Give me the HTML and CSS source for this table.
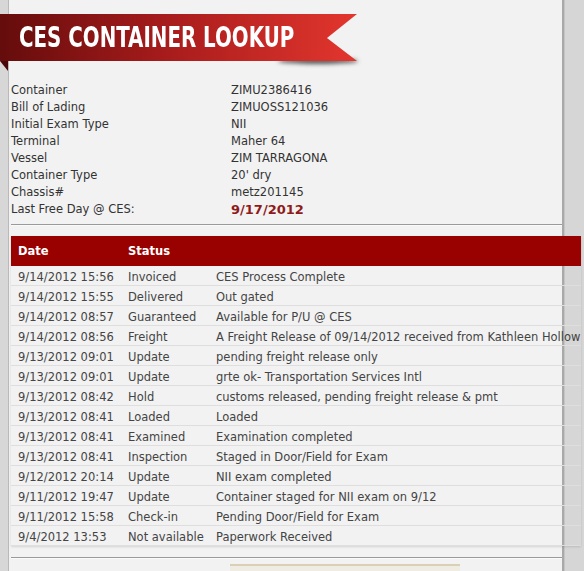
FILE: index.html
```html
<!DOCTYPE html>
<html>
<head>
<meta charset="utf-8">
<title>CES Container Lookup</title>
<link rel="stylesheet" href="styles.css">
</head>
<body>
<div class="page">
  <div class="gutter-left"></div>
  <main class="panel">
    <div class="ribbon">
      <svg class="ribbon-bg" width="360" height="60" viewBox="0 0 360 60">
        <defs>
          <linearGradient id="rg" x1="0" y1="0" x2="1" y2="0">
            <stop offset="0" stop-color="#650c0c"/>
            <stop offset="0.45" stop-color="#a51b1b"/>
            <stop offset="1" stop-color="#e3362e"/>
          </linearGradient>
          <filter id="blur" x="-20%" y="-200%" width="140%" height="500%">
            <feGaussianBlur stdDeviation="2"/>
          </filter>
        </defs>
        <ellipse cx="318" cy="47" rx="40" ry="3" fill="#555" filter="url(#blur)"/>
        <polygon points="0,0 357,0 327,24 357,47 0,47" fill="url(#rg)"/>
        <polygon points="0,47 8,47 8,57" fill="#4a0707"/>
      </svg>
      <h1 class="ribbon-title">CES CONTAINER LOOKUP</h1>
    </div>

    <dl class="info">
      <div class="info-row"><dt>Container</dt><dd>ZIMU2386416</dd></div>
      <div class="info-row"><dt>Bill of Lading</dt><dd>ZIMUOSS121036</dd></div>
      <div class="info-row"><dt>Initial Exam Type</dt><dd>NII</dd></div>
      <div class="info-row"><dt>Terminal</dt><dd>Maher 64</dd></div>
      <div class="info-row"><dt>Vessel</dt><dd>ZIM TARRAGONA</dd></div>
      <div class="info-row"><dt>Container Type</dt><dd>20' dry</dd></div>
      <div class="info-row"><dt>Chassis#</dt><dd>metz201145</dd></div>
      <div class="info-row"><dt>Last Free Day @ CES:</dt><dd class="due">9/17/2012</dd></div>
    </dl>

    <hr class="rule">

    <div class="history">
      <div class="h-row h-head"><span class="c-date">Date</span><span class="c-status">Status</span><span class="c-desc"></span></div>
      <div class="h-row"><span class="c-date">9/14/2012 15:56</span><span class="c-status">Invoiced</span><span class="c-desc">CES Process Complete</span></div>
      <div class="h-row"><span class="c-date">9/14/2012 15:55</span><span class="c-status">Delivered</span><span class="c-desc">Out gated</span></div>
      <div class="h-row"><span class="c-date">9/14/2012 08:57</span><span class="c-status">Guaranteed</span><span class="c-desc">Available for P/U @ CES</span></div>
      <div class="h-row"><span class="c-date">9/14/2012 08:56</span><span class="c-status">Freight</span><span class="c-desc">A Freight Release of 09/14/2012 received from Kathleen Hollow</span></div>
      <div class="h-row"><span class="c-date">9/13/2012 09:01</span><span class="c-status">Update</span><span class="c-desc">pending freight release only</span></div>
      <div class="h-row"><span class="c-date">9/13/2012 09:01</span><span class="c-status">Update</span><span class="c-desc">grte ok- Transportation Services Intl</span></div>
      <div class="h-row"><span class="c-date">9/13/2012 08:42</span><span class="c-status">Hold</span><span class="c-desc">customs released, pending freight release &amp; pmt</span></div>
      <div class="h-row"><span class="c-date">9/13/2012 08:41</span><span class="c-status">Loaded</span><span class="c-desc">Loaded</span></div>
      <div class="h-row"><span class="c-date">9/13/2012 08:41</span><span class="c-status">Examined</span><span class="c-desc">Examination completed</span></div>
      <div class="h-row"><span class="c-date">9/13/2012 08:41</span><span class="c-status">Inspection</span><span class="c-desc">Staged in Door/Field for Exam</span></div>
      <div class="h-row"><span class="c-date">9/12/2012 20:14</span><span class="c-status">Update</span><span class="c-desc">NII exam completed</span></div>
      <div class="h-row"><span class="c-date">9/11/2012 19:47</span><span class="c-status">Update</span><span class="c-desc">Container staged for NII exam on 9/12</span></div>
      <div class="h-row"><span class="c-date">9/11/2012 15:58</span><span class="c-status">Check-in</span><span class="c-desc">Pending Door/Field for Exam</span></div>
      <div class="h-row"><span class="c-date">9/4/2012 13:53</span><span class="c-status">Not available</span><span class="c-desc">Paperwork Received</span></div>
    </div>

    <hr class="rule rule-bottom">
    <div class="button-edge"></div>
  </main>
  <div class="gutter-right"></div>
</div>
</body>
</html>
```

FILE: styles.css
```css
* { box-sizing: border-box; }

html, body {
  margin: 0;
  padding: 0;
  background: #f2f2f2;
  font-family: "DejaVu Sans", Verdana, sans-serif;
  font-size: 11.5px;
  color: #333;
}

.page {
  display: flex;
  width: 584px;
  height: 571px;
  overflow: hidden;
}

.gutter-left {
  flex: 0 0 9px;
  background: #d7d7d7;
  border-right: 1px solid #b9b9b9;
}

.gutter-right {
  flex: 0 0 22px;
  background: #d6d6d6;
  border-left: 2px solid #a9a9a9;
  box-shadow: inset 1px 0 0 #c4c4c4;
}

.panel {
  flex: 1 1 auto;
  padding-left: 2px;
  min-width: 0;
  position: relative;
  z-index: 1;
}

.ribbon {
  position: relative;
  margin: 14px 0 0 -11px;
  height: 47px;
  width: 360px;
}

.ribbon-bg {
  position: absolute;
  left: 0;
  top: 0;
  overflow: visible;
}

.ribbon-title {
  position: relative;
  margin: 0 0 0 19px;
  line-height: 47px;
  font-family: "DejaVu Sans Condensed", "DejaVu Sans", sans-serif;
  font-stretch: condensed;
  font-weight: bold;
  font-size: 29px;
  color: #fff;
  white-space: nowrap;
  transform: scaleX(0.76);
  transform-origin: 0 50%;
}

.info {
  margin: 21px 0 0;
  padding: 0;
}

.info-row {
  display: flex;
  height: 17px;
  line-height: 17px;
}

.info-row dt {
  flex: 0 0 220px;
  margin: 0;
}

.info-row dd {
  margin: 0;
}

.info-row .due {
  color: #8e1a1a;
  font-weight: bold;
  font-size: 13px;
}

.rule {
  margin: 6px 0 0;
  border: 0;
  border-top: 1px solid #9a9a9a;
  border-bottom: 1px solid #fafafa;
  height: 0;
}

.history {
  margin: 10px -19px 0 0;
  box-shadow: 0 1px 2px rgba(0,0,0,0.12);
}

.h-row {
  display: flex;
  height: 20px;
  padding-top: 3px;
  line-height: 16px;
  border-bottom: 1px solid #dedede;
  white-space: nowrap;
  overflow: hidden;
  color: #444;
}

.h-head {
  height: 30px;
  padding-top: 0;
  line-height: 30px;
  background: #990000;
  color: #fff;
  font-weight: bold;
  border-bottom: 0;
}

.c-date {
  flex: 0 0 117px;
  padding-left: 7px;
}

.c-status {
  flex: 0 0 88px;
}

.c-desc {
  flex: 1 1 auto;
  overflow: hidden;
}

.rule-bottom {
  margin-top: 11px;
}

.button-edge {
  margin: 5px 0 0 219px;
  width: 230px;
  height: 8px;
  border-top: 2px solid #d9d0b6;
  background: #efece4;
}
```
